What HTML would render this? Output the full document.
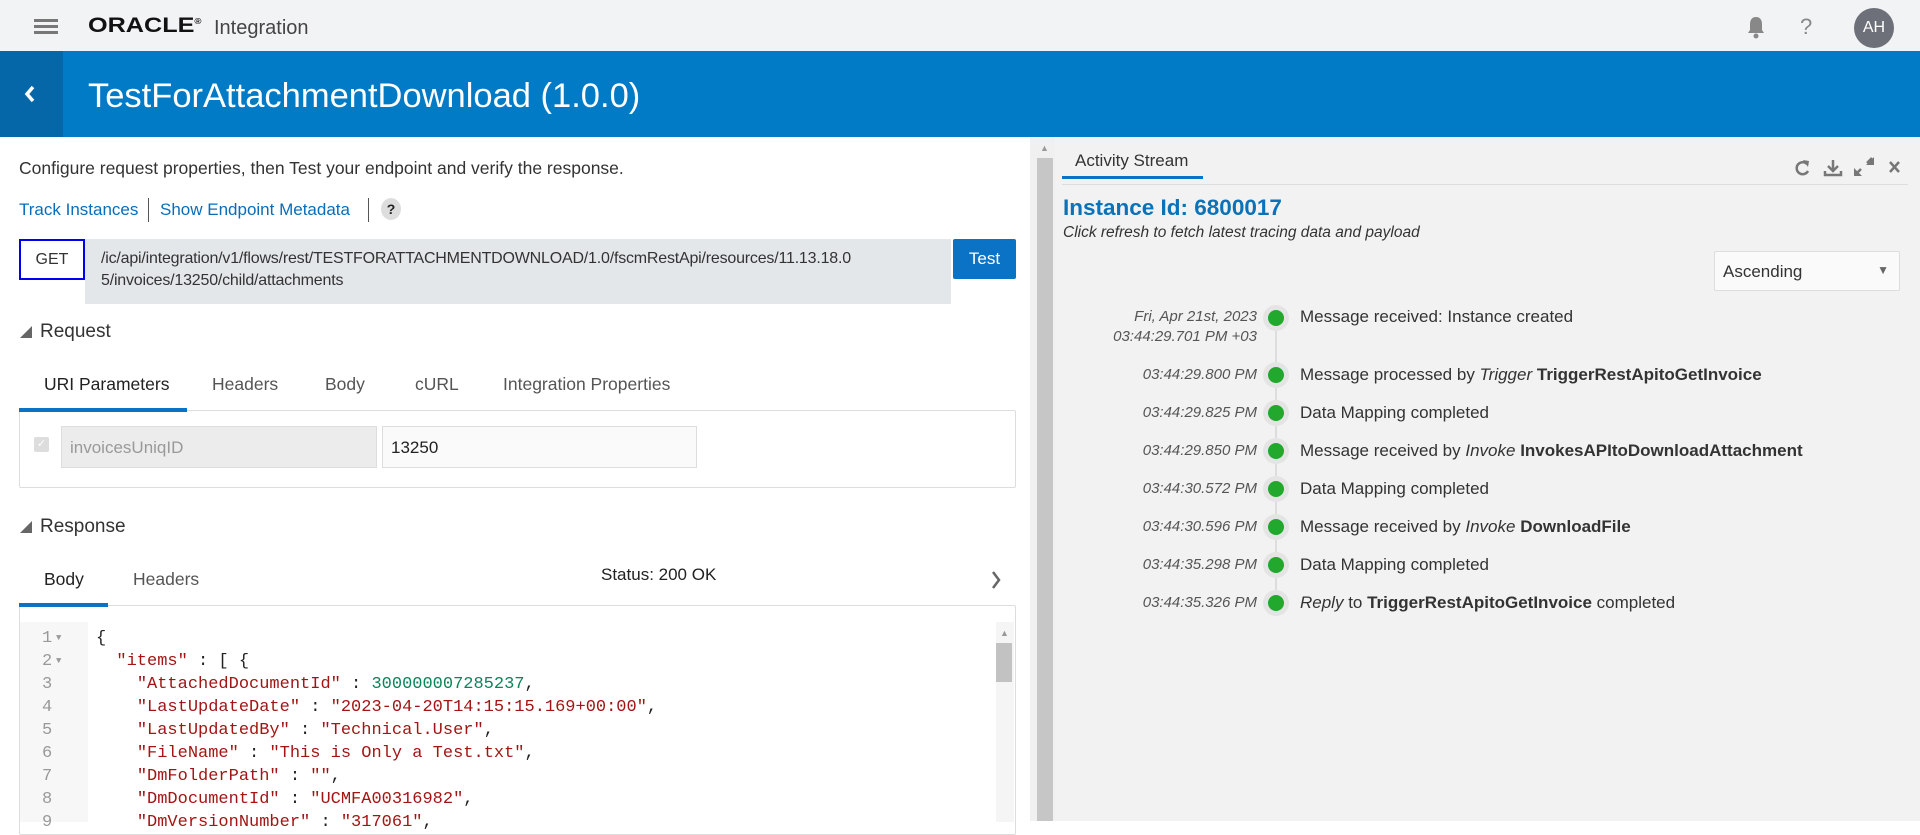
<!DOCTYPE html>
<html><head><meta charset="utf-8"><style>
*{box-sizing:border-box;margin:0;padding:0}
body{width:1920px;height:821px;overflow:hidden;font-family:"Liberation Sans",sans-serif;color:#333;background:#fff;position:relative}
.a{position:absolute;white-space:nowrap}
.hdr{left:0;top:0;width:1920px;height:51px;background:#f2f3f5}
.band{left:0;top:51px;width:1920px;height:86px;background:#027bc6}
.back{left:0;top:51px;width:63px;height:86px;background:#0667a8}
.link{color:#0a6db8;font-size:17px}
.tab{font-size:17.5px;color:#555}
.code{font-family:"Liberation Mono",monospace;font-size:17px;line-height:23px}
.k{color:#a31515}.s{color:#a31515}.n{color:#098658}
.ln{color:#999;text-align:left;width:40px;padding-left:22px;position:relative}
.ln span{position:absolute;left:36px;top:0;font-size:9px}
.right{left:1055px;top:137px;width:865px;height:684px;background:#f2f2f2}
.tm{font-style:italic;font-size:15px;color:#555;text-align:right;width:200px}
.msg{font-size:17px;color:#333}
.dot{width:26px;height:26px;border-radius:50%;background:#e4e4e4}
.dot i{position:absolute;left:5px;top:5px;width:16px;height:16px;border-radius:50%;background:#22a82d}
</style></head><body>
<div class="a hdr"></div>
<div class="a" style="left:34px;top:19px;width:24px;height:3px;background:#777"></div>
<div class="a" style="left:34px;top:25px;width:24px;height:3px;background:#777"></div>
<div class="a" style="left:34px;top:31px;width:24px;height:3px;background:#777"></div>
<div class="a" style="left:88px;top:14px;font-size:21px;font-weight:bold;color:#111;transform:scaleX(1.2);transform-origin:left">ORACLE<sup style="font-size:8px">®</sup></div>
<div class="a" style="left:214px;top:17px;font-size:20px;color:#444">Integration</div>
<svg class="a" style="left:1746px;top:15px" width="20" height="24" viewBox="0 0 20 24"><path d="M10 2c-4 0-6 3-6 7v6l-2 3h16l-2-3V9c0-4-2-7-6-7z" fill="#888"/><circle cx="10" cy="21" r="2.5" fill="#888"/></svg>
<div class="a" style="left:1800px;top:14px;font-size:22px;color:#888">?</div>
<div class="a" style="left:1854px;top:8px;width:40px;height:40px;border-radius:50%;background:#6e7079;color:#fff;font-size:16px;text-align:center;line-height:40px">AH</div>

<div class="a band"></div>
<div class="a back"></div>
<svg class="a" style="left:23px;top:85px" width="14" height="18" viewBox="0 0 14 18"><path d="M10 2L4 9l6 7" stroke="#fff" stroke-width="3.5" fill="none"/></svg>
<div class="a" style="left:88px;top:77px;font-size:34.5px;color:#fff;font-weight:300">TestForAttachmentDownload (1.0.0)</div>

<div class="a" style="left:19px;top:158px;font-size:17.5px;color:#333">Configure request properties, then Test your endpoint and verify the response.</div>
<div class="a link" style="left:19px;top:200px">Track Instances</div>
<div class="a" style="left:148px;top:198px;width:1px;height:24px;background:#555"></div>
<div class="a link" style="left:160px;top:200px">Show Endpoint Metadata</div>
<div class="a" style="left:368px;top:198px;width:1px;height:24px;background:#555"></div>
<div class="a" style="left:381px;top:198px;width:20px;height:22px;border-radius:50%;background:#ddd;font-size:14px;font-weight:bold;text-align:center;line-height:22px;color:#222">?</div>

<div class="a" style="left:19px;top:239px;width:66px;height:41px;border:2px solid #0000ee;font-size:16px;text-align:center;line-height:37px;color:#333">GET</div>
<div class="a" style="left:85px;top:239px;width:866px;height:65px;background:#e4e7ea"></div>
<div class="a" style="left:101px;top:248px;font-size:16px;line-height:22px;color:#333;letter-spacing:-0.2px">/ic/api/integration/v1/flows/rest/TESTFORATTACHMENTDOWNLOAD/1.0/fscmRestApi/resources/11.13.18.0<br>5/invoices/13250/child/attachments</div>
<div class="a" style="left:953px;top:239px;width:63px;height:40px;background:#0a73c5;border-radius:2px;color:#fff;font-size:17px;text-align:center;line-height:40px">Test</div>

<svg class="a" style="left:19px;top:325px" width="14" height="14"><path d="M13 1V13H1z" fill="#666"/></svg>
<div class="a" style="left:40px;top:321px;font-size:19px;color:#333">Request</div>
<div class="a tab" style="left:44px;top:374px;color:#222">URI Parameters</div>
<div class="a tab" style="left:212px;top:374px">Headers</div>
<div class="a tab" style="left:325px;top:374px">Body</div>
<div class="a tab" style="left:415px;top:374px">cURL</div>
<div class="a tab" style="left:503px;top:374px">Integration Properties</div>
<div class="a" style="left:19px;top:410px;width:997px;height:78px;border:1px solid #ddd;border-radius:2px"></div>
<div class="a" style="left:19px;top:408px;width:168px;height:4px;background:#0a73c5"></div>
<div class="a" style="left:34px;top:437px;width:15px;height:15px;background:#ddd;border-radius:2px;color:#fff;font-size:11px;text-align:center;line-height:15px">✓</div>
<div class="a" style="left:61px;top:426px;width:316px;height:42px;background:#ececec;border:1px solid #ddd;font-size:17px;color:#999;padding:11px 8px">invoicesUniqID</div>
<div class="a" style="left:382px;top:426px;width:315px;height:42px;background:#fafafa;border:1px solid #ddd;font-size:17px;color:#222;padding:11px 8px">13250</div>

<svg class="a" style="left:19px;top:520px" width="14" height="14"><path d="M13 1V13H1z" fill="#666"/></svg>
<div class="a" style="left:40px;top:516px;font-size:19px;color:#333">Response</div>
<div class="a tab" style="left:44px;top:569px;color:#222">Body</div>
<div class="a tab" style="left:133px;top:569px">Headers</div>
<div class="a" style="left:601px;top:565px;font-size:17px;color:#222">Status: 200 OK</div>
<svg class="a" style="left:990px;top:570px" width="12" height="20"><path d="M3 2l6 8-6 8" stroke="#666" stroke-width="2.5" fill="none"/></svg>
<div class="a" style="left:19px;top:605px;width:997px;height:230px;border:1px solid #ddd;border-radius:2px"></div>
<div class="a" style="left:19px;top:603px;width:89px;height:4px;background:#0a73c5"></div>
<div class="a" style="left:20px;top:622px;width:68px;height:200px;background:#f7f7f7"></div>
<div class="a code" style="left:20px;top:627px">
<div class="ln">1<span>▼</span></div><div class="ln">2<span>▼</span></div><div class="ln">3</div><div class="ln">4</div><div class="ln">5</div><div class="ln">6</div><div class="ln">7</div><div class="ln">8</div><div class="ln">9</div></div>
<div class="a code" style="left:96px;top:627px;color:#222;white-space:pre">{
  <span class="k">"items"</span> : [ {
    <span class="k">"AttachedDocumentId"</span> : <span class="n">300000007285237</span>,
    <span class="k">"LastUpdateDate"</span> : <span class="s">"2023-04-20T14:15:15.169+00:00"</span>,
    <span class="k">"LastUpdatedBy"</span> : <span class="s">"Technical.User"</span>,
    <span class="k">"FileName"</span> : <span class="s">"This is Only a Test.txt"</span>,
    <span class="k">"DmFolderPath"</span> : <span class="s">""</span>,
    <span class="k">"DmDocumentId"</span> : <span class="s">"UCMFA00316982"</span>,
    <span class="k">"DmVersionNumber"</span> : <span class="s">"317061"</span>,</div>
<div class="a" style="left:996px;top:622px;width:18px;height:200px;background:#f5f5f5"></div>
<div class="a" style="left:996px;top:643px;width:16px;height:39px;background:#c2c2c2"></div>
<div class="a" style="left:1000px;top:628px;font-size:9px;color:#999">▲</div>

<div class="a" style="left:1030px;top:137px;width:25px;height:684px;background:#f0f0f0"></div>
<div class="a" style="left:1037px;top:158px;width:16px;height:663px;background:#c6c6c6"></div>
<div class="a" style="left:1040px;top:143px;font-size:9px;color:#999">▲</div>
<div class="a right"></div>
<div class="a" style="left:1075px;top:151px;font-size:17px;color:#333">Activity Stream</div>
<div class="a" style="left:1062px;top:176px;width:141px;height:3px;background:#0a73c5"></div>
<div class="a" style="left:1062px;top:184px;width:846px;height:1px;background:#ddd"></div>
<svg class="a" style="left:1792px;top:157px" width="120" height="22" viewBox="0 0 120 22">
<path d="M15 7a6 6 0 1 0 1 7" stroke="#777" stroke-width="2.5" fill="none"/><path d="M11 3l6 1-1 6z" fill="#777"/>
<path d="M41 3v10M36 9l5 5 5-5" stroke="#777" stroke-width="2.5" fill="none"/><path d="M33 14v4h16v-4" stroke="#777" stroke-width="2.5" fill="none"/>
<path d="M64 17l5-5M75 6l5-5" stroke="#777" stroke-width="2.5"/><path d="M62 11v8h8zM82 0v8h-8z" fill="#777"/>
<path d="M98 5l9 10M107 5l-9 10" stroke="#777" stroke-width="2.5"/></svg>
<div class="a" style="left:1063px;top:195px;font-size:22.5px;font-weight:bold;color:#0a72b8">Instance Id: 6800017</div>
<div class="a" style="left:1063px;top:224px;font-size:15.5px;font-style:italic;color:#333">Click refresh to fetch latest tracing data and payload</div>
<div class="a" style="left:1714px;top:251px;width:186px;height:40px;background:#fafafa;border:1px solid #ddd;border-radius:2px;font-size:17px;color:#333;padding:10px 8px">Ascending<span style="position:absolute;right:10px;top:11px;font-size:12px;color:#666">▼</span></div>
<div class="a" style="left:1275px;top:318px;width:2px;height:285px;background:#ddd"></div>
<div class="a tm" style="left:1057px;top:307px;line-height:20px">Fri, Apr 21st, 2023<br>03:44:29.701 PM +03</div>
<div class="a dot" style="left:1263px;top:305px"><i></i></div>
<div class="a msg" style="left:1300px;top:307px">Message received: Instance created</div>
<div class="a tm" style="left:1057px;top:366px">03:44:29.800 PM</div><div class="a dot" style="left:1263px;top:362px"><i></i></div>
<div class="a msg" style="left:1300px;top:365px">Message processed by <i>Trigger</i> <b>TriggerRestApitoGetInvoice</b></div>
<div class="a tm" style="left:1057px;top:404px">03:44:29.825 PM</div><div class="a dot" style="left:1263px;top:400px"><i></i></div>
<div class="a msg" style="left:1300px;top:403px">Data Mapping completed</div>
<div class="a tm" style="left:1057px;top:442px">03:44:29.850 PM</div><div class="a dot" style="left:1263px;top:438px"><i></i></div>
<div class="a msg" style="left:1300px;top:441px">Message received by <i>Invoke</i> <b>InvokesAPItoDownloadAttachment</b></div>
<div class="a tm" style="left:1057px;top:480px">03:44:30.572 PM</div><div class="a dot" style="left:1263px;top:476px"><i></i></div>
<div class="a msg" style="left:1300px;top:479px">Data Mapping completed</div>
<div class="a tm" style="left:1057px;top:518px">03:44:30.596 PM</div><div class="a dot" style="left:1263px;top:514px"><i></i></div>
<div class="a msg" style="left:1300px;top:517px">Message received by <i>Invoke</i> <b>DownloadFile</b></div>
<div class="a tm" style="left:1057px;top:556px">03:44:35.298 PM</div><div class="a dot" style="left:1263px;top:552px"><i></i></div>
<div class="a msg" style="left:1300px;top:555px">Data Mapping completed</div>
<div class="a tm" style="left:1057px;top:594px">03:44:35.326 PM</div><div class="a dot" style="left:1263px;top:590px"><i></i></div>
<div class="a msg" style="left:1300px;top:593px"><i>Reply</i> to <b>TriggerRestApitoGetInvoice</b> completed</div>
</body></html>
